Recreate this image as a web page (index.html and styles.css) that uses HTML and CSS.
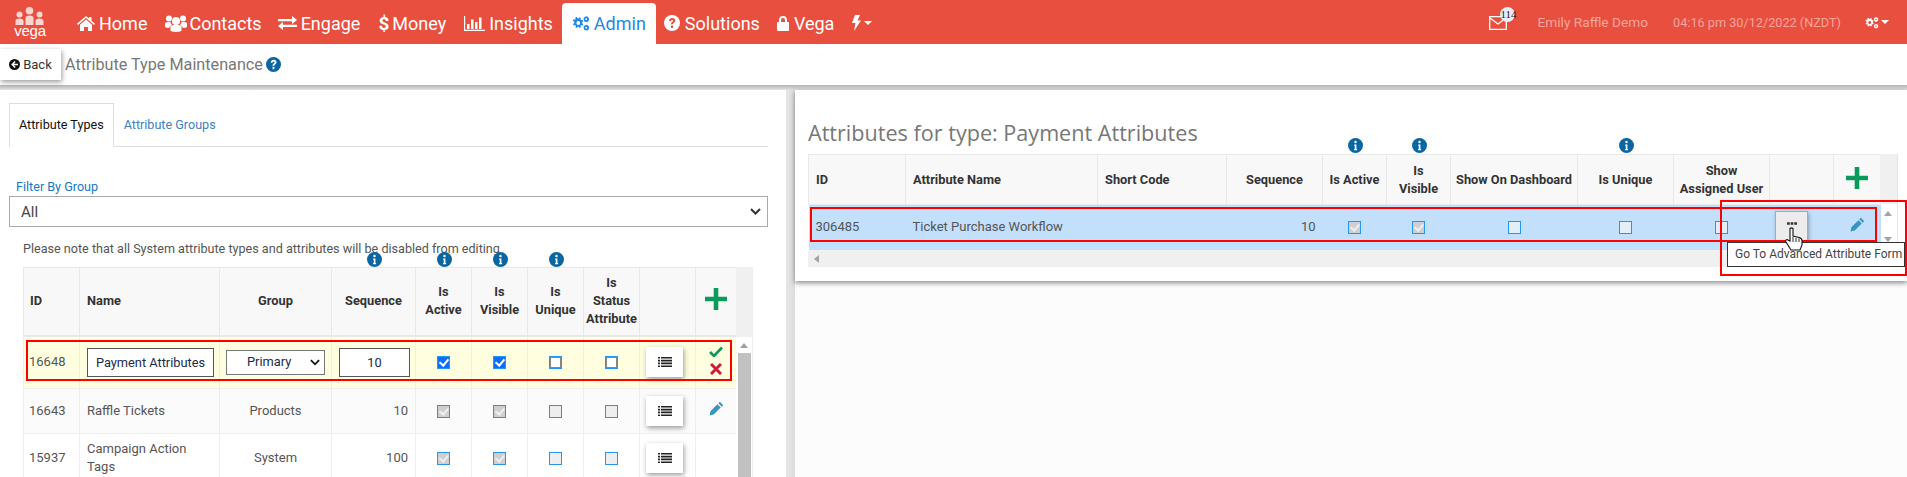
FILE: index.html
```html
<!DOCTYPE html>
<html lang="en">
<head>
    <meta charset="UTF-8">
    <title>Attribute Type Maintenance</title>
    <link rel="stylesheet" href="styles.css">
</head>
<body>
    <!-- Icons -->
    <svg class="defs" width="0" height="0">
        <symbol id="i-info" viewBox="0 0 16 16">
            <circle cx="8" cy="8" r="8" fill="#0a66a3"/>
            <circle cx="8" cy="4.3" r="1.3" fill="#fff"/>
            <path d="M6.6 6.900h2.400v4.900h.7v1.300H6.400v-1.300h.8V8.200h-.6z" fill="#fff"/>
        </symbol>
        <symbol id="i-list" viewBox="0 0 14 10">
            <path d="M0 0h2v1.600H0zM3 0h11v1.600H3zM0 2.800h2v1.600H0zM3 2.800h11v1.600H3zM0 5.600h2v1.600H0zM3 5.600h11v1.600H3zM0 8.400h2V10H0zM3 8.400h11V10H3z" fill="#222"/>
        </symbol>
        <symbol id="i-pencil" viewBox="0 0 16 16">
            <path d="M11.6 .9l3.500 3.500-1.600 1.600L10 2.500zM9 3.500L12.500 7 5 14.500 .6 15.400l.9-4.400z" fill="#3a93c0"/>
        </symbol>
        <symbol id="i-plus" viewBox="0 0 22 22">
            <path d="M8.700 0h4.600v8.700H22v4.600h-8.700V22H8.700v-8.700H0V8.700h8.700z" fill="#0a9a5c"/>
        </symbol>
        <symbol id="i-gears" viewBox="0 0 20 16">
            <path d="M7 3l1.200.3.7-1.300 1.600.9-.5 1.300.9.9 1.300-.5.8 1.600-1.200.8v1.300l1.200.7-.8 1.700-1.300-.5-.9.9.5 1.400-1.600.8-.7-1.300H7l-.7 1.300-1.600-.8.5-1.400-.9-.9-1.400.5-.8-1.700 1.300-.7V6.500L1.800 5.700l.8-1.600 1.400.5.9-.9-.5-1.300 1.600-.9zM7.700 6a2 2 0 100 4 2 2 0 000-4z" fill="currentColor"/>
            <path d="M16 .5l.7.8 1-.2.3 1 1 .4-.3 1 .6.9-.8.7.1 1-1 .2-.5.9-1-.4-.9.4-.5-.9-1-.2.1-1-.8-.7.6-.9-.3-1 1-.4.3-1 1 .2zM16 3a1 1 0 100 2 1 1 0 000-2zM16 9.500l.7.8 1-.2.3 1 1 .4-.3 1 .6.9-.8.7.1 1-1 .2-.5.9-1-.4-.9.4-.5-.9-1-.2.1-1-.8-.7.6-.9-.3-1 1-.4.3-1 1 .2zM16 12a1 1 0 100 2 1 1 0 000-2z" fill="currentColor"/>
        </symbol>
    </svg>

    <!-- Navigation Bar -->
    <header class="topbar">
        <div class="logo">
            <svg width="30" height="18" viewBox="0 0 30 18">
                <g fill="#fbd5cf">
                    <circle cx="14.500" cy="3.800" r="3.800"/>
                    <path d="M10.500 11q0-2.500 4-2.500t4 2.500v7h-8z"/>
                    <circle cx="4.500" cy="7.500" r="3"/>
                    <path d="M.5 14q0-2.500 4-2.500t4 2.500v4h-8z"/>
                    <circle cx="24.500" cy="7.500" r="3"/>
                    <path d="M20.500 14q0-2.500 4-2.500t4 2.500v4h-8z"/>
                </g>
            </svg>
            <span class="logo-text">vega</span>
        </div>
        <nav class="menu">
            <a class="menu-item">
                <svg width="18" height="15" viewBox="0 0 18 15"><path d="M9 0l3 2.600V1h2.500v3.800L18 7.800l-1 1.100L9 2 1 8.900 0 7.800zM9 3.500l6 5.200V15h-4v-4H7v4H3V8.700z" fill="#fff"/></svg>
                Home
            </a>
            <a class="menu-item contacts">
                <svg width="22" height="17" viewBox="0 0 22 17"><g fill="#fff"><circle cx="11" cy="6" r="4"/><path d="M5.500 11q5.500-3 11 0v5q-5.500 2-11 0z"/><circle cx="4" cy="3.500" r="3"/><circle cx="18" cy="3.500" r="3"/><path d="M0 8q2-1.500 5.500-.8Q6 9 7 10q-2.500 1-3 3-2.500 0-4-1zM22 8q-2-1.500-5.500-.8Q16 9 15 10q2.500 1 3 3 2.500 0 4-1z"/></g></svg>
                Contacts
            </a>
            <a class="menu-item engage">
                <svg width="19" height="14" viewBox="0 0 19 14"><path d="M0 3h14V0l5 4-5 4V5.200H0zM19 8.800H5V6l-5 4 5 4v-3h14z" fill="#fff"/></svg>
                Engage
            </a>
            <a class="menu-item money"><span class="dollar">$</span> Money</a>
            <a class="menu-item insights">
                <svg width="21" height="15" viewBox="0 0 21 15"><path d="M0 0h1.200v13.800H21V15H0zM3 8h2.500v5H3zM7 3.500h2.500V13H7zM11 6h2.500v7H11zM15 1.500h2.500V13H15z" fill="#fff"/></svg>
                Insights
            </a>
            <a class="menu-item admin">
                <svg width="19" height="16" viewBox="0 0 20 16"><use href="#i-gears"/></svg>
                Admin
            </a>
            <a class="menu-item solutions">
                <svg width="16" height="16" viewBox="0 0 16 16"><circle cx="8" cy="8" r="8" fill="#fff"/><path d="M5 6q.3-3 3.200-3 3 .1 3 2.700 0 1.400-1.400 2.200-.9.5-.9 1.400H7V8.800q0-1.300 1.200-1.900.9-.5.9-1.100 0-.9-.9-.9-1 0-1.300 1.300zM7 10.500h2V13H7z" fill="#e94f3f"/></svg>
                Solutions
            </a>
            <a class="menu-item vega">
                <svg width="12" height="15" viewBox="0 0 12 15"><path d="M2 6V4a4 4 0 018 0v2h1a1 1 0 011 1v7a1 1 0 01-1 1H1a1 1 0 01-1-1V7a1 1 0 011-1zm2 0h4V4a2 2 0 00-4 0z" fill="#fff"/></svg>
                Vega
            </a>
            <a class="menu-item bolt">
                <svg width="9" height="16" viewBox="0 0 9 16"><path d="M3 0h5L5.500 5.500H9L2 16l1.500-8H0z" fill="#fff"/></svg>
                <i class="caret"></i>
            </a>
        </nav>
        <div class="user-area">
            <div class="mail">
                <svg width="18" height="14" viewBox="0 0 18 14"><path d="M.7.700h16.600v12.600H.7zM1 2l8 6 8-6" fill="none" stroke="#fff" stroke-width="1.300"/></svg>
                <span class="badge">114</span>
            </div>
            <span class="user-name">Emily Raffle Demo</span>
            <span class="clock">04:16 pm 30/12/2022 (NZDT)</span>
            <div class="settings">
                <svg width="15" height="13" viewBox="0 0 20 16"><use href="#i-gears"/></svg>
                <i class="caret"></i>
            </div>
        </div>
    </header>

    <!-- Sub header -->
    <div class="subbar">
        <button class="back-btn">
            <svg width="11" height="11" viewBox="0 0 16 16"><circle cx="8" cy="8" r="8" fill="#111"/><path d="M8.200 3l1.500 1.500L7.200 7H13v2H7.200l2.500 2.500L8.200 13l-5-5z" fill="#fff"/></svg>
            Back
        </button>
        <h1 class="page-title">Attribute Type Maintenance</h1>
        <svg class="help" width="15" height="15" viewBox="0 0 16 16"><circle cx="8" cy="8" r="8" fill="#0a66a3"/><path d="M5 6q.3-3 3.200-3 3 .1 3 2.700 0 1.400-1.400 2.200-.9.5-.9 1.400H7V8.800q0-1.300 1.200-1.900.9-.5.9-1.100 0-.9-.9-.9-1 0-1.300 1.300zM7 10.500h2V13H7z" fill="#fff"/></svg>
    </div>
    <div class="sub-shadow"></div>

    <div class="content">
        <!-- Left panel -->
        <section class="left-panel">
            <div class="tabs">
                <a class="tab active">Attribute Types</a>
                <a class="tab">Attribute Groups</a>
            </div>
            <label class="filter-label">Filter By Group</label>
            <div class="filter-select">
                <span>All</span>
                <svg width="11" height="7" viewBox="0 0 11 7"><path d="M1 1l4.500 4.500L10 1" fill="none" stroke="#333" stroke-width="2"/></svg>
            </div>
            <p class="note">Please note that all System attribute types and attributes will be disabled from editing</p>

            <div class="table-wrap">
                <table class="grid types">
                    <colgroup>
                        <col style="width:56px"><col style="width:140px"><col style="width:112px"><col style="width:84px">
                        <col style="width:56px"><col style="width:56px"><col style="width:56px"><col style="width:56px">
                        <col style="width:56px"><col style="width:41px">
                    </colgroup>
                    <thead>
                        <tr>
                            <th class="left">ID</th>
                            <th class="left">Name</th>
                            <th>Group</th>
                            <th class="has-info"><svg class="info"><use href="#i-info"/></svg>Sequence</th>
                            <th class="has-info"><svg class="info"><use href="#i-info"/></svg>Is<br>Active</th>
                            <th class="has-info"><svg class="info"><use href="#i-info"/></svg>Is<br>Visible</th>
                            <th class="has-info"><svg class="info"><use href="#i-info"/></svg>Is<br>Unique</th>
                            <th>Is<br>Status<br>Attribute</th>
                            <th></th>
                            <th><svg class="plus"><use href="#i-plus"/></svg></th>
                        </tr>
                    </thead>
                    <tbody>
                        <tr class="edit-row">
                            <td>16648</td>
                            <td><input class="field name-field" value="Payment Attributes"></td>
                            <td class="center">
                                <div class="group-select"><span>Primary</span>
                                    <svg width="10" height="7" viewBox="0 0 11 7"><path d="M1 1l4.500 4.500L10 1" fill="none" stroke="#111" stroke-width="2"/></svg>
                                </div>
                            </td>
                            <td><input class="field seq-field" value="10"></td>
                            <td class="center"><i class="check on"></i></td>
                            <td class="center"><i class="check on"></i></td>
                            <td class="center"><i class="check blank"></i></td>
                            <td class="center"><i class="check blank"></i></td>
                            <td class="center"><button class="list-btn"><svg width="14" height="10"><use href="#i-list"/></svg></button></td>
                            <td class="center actions">
                                <svg width="14" height="11" viewBox="0 0 14 11"><path d="M1 6l4 4 8-8.500" fill="none" stroke="#0a9a5c" stroke-width="2.600"/></svg>
                                <svg width="12" height="12" viewBox="0 0 12 12"><path d="M1 1l10 10M11 1L1 11" fill="none" stroke="#d01c3c" stroke-width="3"/></svg>
                            </td>
                        </tr>
                        <tr class="row-a">
                            <td>16643</td><td>Raffle Tickets</td><td class="center">Products</td><td class="right">10</td>
                            <td class="center"><i class="check off-on"></i></td>
                            <td class="center"><i class="check off-on"></i></td>
                            <td class="center"><i class="check off"></i></td>
                            <td class="center"><i class="check off"></i></td>
                            <td class="center"><button class="list-btn"><svg width="14" height="10"><use href="#i-list"/></svg></button></td>
                            <td class="center"><svg width="15" height="15"><use href="#i-pencil"/></svg></td>
                        </tr>
                        <tr class="row-b">
                            <td>15937</td><td>Campaign Action Tags</td><td class="center">System</td><td class="right">100</td>
                            <td class="center"><i class="check off-on"></i></td>
                            <td class="center"><i class="check off-on"></i></td>
                            <td class="center"><i class="check off"></i></td>
                            <td class="center"><i class="check off"></i></td>
                            <td class="center"><button class="list-btn"><svg width="14" height="10"><use href="#i-list"/></svg></button></td>
                            <td></td>
                        </tr>
                    </tbody>
                </table>
                <div class="vscroll">
                    <div class="vscroll-head"></div>
                    <i class="arrow-up"></i>
                    <div class="vscroll-thumb"></div>
                </div>
                <div class="red-box edit-box"></div>
            </div>
        </section>

        <div class="divider"></div>

        <!-- Right panel -->
        <section class="right-panel">
            <div class="card">
                <h2 class="card-title">Attributes for type: Payment Attributes</h2>
                <div class="table-wrap attr-wrap">
                    <table class="grid attrs">
                        <colgroup>
                            <col style="width:97px"><col style="width:192px"><col style="width:129px"><col style="width:96px">
                            <col style="width:64px"><col style="width:64px"><col style="width:127px"><col style="width:96px">
                            <col style="width:96px"><col style="width:64px"><col style="width:47px">
                        </colgroup>
                        <thead>
                            <tr>
                                <th class="left">ID</th>
                                <th class="left">Attribute Name</th>
                                <th class="left">Short Code</th>
                                <th>Sequence</th>
                                <th class="has-info"><svg class="info"><use href="#i-info"/></svg>Is Active</th>
                                <th class="has-info"><svg class="info"><use href="#i-info"/></svg>Is<br>Visible</th>
                                <th>Show On Dashboard</th>
                                <th class="has-info"><svg class="info"><use href="#i-info"/></svg>Is Unique</th>
                                <th>Show<br>Assigned User</th>
                                <th></th>
                                <th><svg class="plus"><use href="#i-plus"/></svg></th>
                            </tr>
                        </thead>
                        <tbody>
                            <tr class="selected">
                                <td>306485</td><td>Ticket Purchase Workflow</td><td></td><td class="right">10</td>
                                <td class="center"><i class="check off-on"></i></td>
                                <td class="center"><i class="check off-on"></i></td>
                                <td class="center"><i class="check off"></i></td>
                                <td class="center"><i class="check off"></i></td>
                                <td class="center"><i class="check off"></i></td>
                                <td class="center"><button class="more-btn"><svg width="10" height="3" viewBox="0 0 11 3"><path d="M0 0h3v3H0zM4 0h3v3H4zM8 0h3v3H8z" fill="#333"/></svg></button></td>
                                <td class="center"><svg width="15" height="15"><use href="#i-pencil"/></svg></td>
                            </tr>
                        </tbody>
                    </table>
                    <div class="hscroll"><i class="arrow-left"></i></div>
                    <div class="side-head"></div>
                    <i class="arrow-up side-up"></i>
                    <i class="arrow-down side-down"></i>
                    <div class="red-box row-box"></div>
                    <div class="tooltip">Go To Advanced Attribute Form</div>
                    <div class="red-box tip-box"></div>
                    <svg class="cursor" width="19" height="24" viewBox="0 0 19 24">
                        <path d="M5 1.500q1.500-1.200 3 0V9l6 1.500q3 .8 3 3V18l-2 5H6L1 15q-1-2 1-2.500L5 14z" fill="#fff" stroke="#111" stroke-width="1.100"/>
                        <path d="M8 10v5M11 11v4M14 11.500V15" stroke="#111" stroke-width=".9" fill="none"/>
                    </svg>
                </div>
            </div>
        </section>
    </div>
</body>
</html>
```

FILE: styles.css
```css
/* General Reset */
* {
    box-sizing: border-box;
}

html, body {
    height: 100%;
}

body {
    margin: 0;
    overflow: hidden;
    font-family: Roboto, sans-serif;
    font-size: 13px;
    color: #555;
    background-color: #fff;
}

.defs {
    position: absolute;
}

/* Navigation Bar */
.topbar {
    height: 44px;
    background-color: #e94f3f;
    display: flex;
    align-items: flex-end;
    color: #fff;
}

.logo {
    width: 30px;
    height: 44px;
    margin: 0 32px 0 15px;
    align-self: flex-start;
    padding-top: 7px;
    display: flex;
    flex-direction: column;
    align-items: center;
}

.logo svg {
    flex: none;
}

.logo-text {
    font-family: "Liberation Sans", sans-serif;
    font-size: 15px;
    line-height: 12px;
    letter-spacing: -0.3px;
    color: #fff;
}

.menu {
    display: flex;
    height: 41px;
    flex: 1;
}

.menu-item {
    display: flex;
    align-items: center;
    gap: 4px;
    font-size: 18px;
    height: 41px;
    padding-bottom: 1px;
    white-space: nowrap;
}

.contacts { margin-left: 18px; gap: 2px; }
.engage { margin-left: 16px; }
.money { margin-left: 18px; gap: 3px; }
.insights { margin-left: 18px; }

.dollar {
    font-weight: bold;
    font-size: 19px;
}

.admin {
    margin-left: 9px;
    width: 94px;
    padding-left: 9px;
    background-color: #fff;
    border-radius: 4px 4px 0 0;
    color: #1e88e5;
}

.solutions { margin-left: 8px; gap: 5px; }
.vega { margin-left: 17px; gap: 5px; }
.bolt { margin-left: 18px; gap: 3px; }

.caret {
    display: inline-block;
    width: 0;
    height: 0;
    border-left: 4px solid transparent;
    border-right: 4px solid transparent;
    border-top: 4px solid #fff;
}

.user-area {
    display: flex;
    align-items: center;
    height: 44px;
    padding-right: 18px;
    font-size: 13px;
    color: #f5a59c;
}

.mail {
    position: relative;
    width: 18px;
    height: 14px;
    margin: 2px 30px 0 0;
    display: flex;
}

.badge {
    position: absolute;
    left: 11px;
    top: -9px;
    width: 15px;
    height: 15px;
    border-radius: 50%;
    background-color: #e8edf8;
    color: #222;
    font-family: "Liberation Serif", serif;
    font-size: 11px;
    line-height: 15px;
    text-align: center;
}

.user-name {
    margin-right: 25px;
    font-size: 13.7px;
}

.clock {
    font-size: 12.7px;
}

.settings {
    margin-left: 23px;
    display: flex;
    align-items: center;
    gap: 2px;
    color: #fff;
}

/* Sub header */
.subbar {
    height: 41px;
    display: flex;
    align-items: center;
    background-color: #fff;
}

.back-btn {
    width: 61px;
    height: 31px;
    margin-top: -1px;
    border: none;
    background-color: #fff;
    box-shadow: 1px 2px 5px rgba(0, 0, 0, 0.4);
    font-family: Roboto, sans-serif;
    font-size: 13px;
    color: #333;
    display: flex;
    align-items: center;
    justify-content: center;
    gap: 3px;
    padding: 0;
}

.page-title {
    margin: 0 3px 0 4px;
    font-size: 16.2px;
    font-weight: normal;
    color: #777;
    white-space: nowrap;
}

.sub-shadow {
    height: 5px;
    background: linear-gradient(#b4b4b4, #e2e2e2);
}

/* Content */
.content {
    display: flex;
    height: 387px;
}

.left-panel {
    width: 786px;
    height: 387px;
    overflow: hidden;
    padding: 13px 0 0 9px;
    background-color: #fff;
}

.divider {
    width: 9px;
    background: linear-gradient(90deg, #e6e6e6, #dcdcdc);
}

.tabs {
    display: flex;
    width: 759px;
    height: 44px;
    border-bottom: 1px solid #ddd;
}

.tab {
    padding: 0 10px;
    height: 44px;
    line-height: 44px;
    font-size: 12.6px;
    color: #3b82c4;
    white-space: nowrap;
}

.tab.active {
    color: #111;
    background-color: #fff;
    border: 1px solid #ddd;
    border-bottom-color: #fff;
    line-height: 42px;
    padding: 0 9px;
}

.filter-label {
    display: block;
    margin: 32px 0 0 7px;
    height: 17px;
    line-height: 16px;
    font-size: 12.6px;
    color: #1a78c2;
}

.filter-select {
    width: 759px;
    height: 31px;
    padding: 0 6px 0 11px;
    border: 1px solid #aaa;
    display: flex;
    align-items: center;
    justify-content: space-between;
    font-size: 15px;
    color: #444;
}

.note {
    margin: 13px 0 0 14px;
    height: 17px;
    line-height: 17px;
    font-size: 12.6px;
    color: #555;
    white-space: nowrap;
}

.table-wrap {
    position: relative;
}

.left-panel .table-wrap {
    width: 730px;
    margin: 10px 0 0 14px;
}

/* Tables */
.grid {
    table-layout: fixed;
    border-collapse: collapse;
    background-color: #fff;
}

.types {
    width: 713px;
}

.grid th {
    background-color: #f8f8f8;
    border: 1px solid #e8e8e8;
    color: #333;
    font-weight: bold;
    font-size: 12.8px;
    line-height: 18px;
    text-align: center;
    padding: 0 2px;
}

.grid th.left {
    text-align: left;
    padding-left: 7px;
}

.types thead tr {
    height: 68px;
}

.grid td {
    border: 1px solid #eee;
    padding: 0 7px;
    line-height: 18px;
}

.grid td.center {
    text-align: center;
    padding: 0;
}

.grid td.right {
    text-align: right;
}

.types th:first-child {
    padding-left: 6px;
}

.types td:first-child {
    padding-left: 5px;
}

.has-info {
    position: relative;
}

.info {
    position: absolute;
    left: 50%;
    top: -16px;
    width: 15px;
    height: 15px;
    margin-left: -7px;
}

.plus {
    display: block;
    width: 22px;
    height: 22px;
    margin: -4px auto 0;
}

.edit-row {
    height: 53px;
    background-color: #ffffe0;
}

.types .edit-row td {
    border-top: 2px solid #e8e8e8;
}

.row-a {
    height: 45px;
    background-color: #fbfbfb;
}

.row-b {
    height: 48px;
}

.field {
    height: 29px;
    border: 1px solid #555;
    background-color: #fff;
    font-family: Roboto, sans-serif;
    font-size: 12.8px;
    color: #1b2a49;
    text-align: center;
    padding: 0;
    display: block;
}

.name-field {
    width: 127px;
}

.seq-field {
    width: 71px;
}

.group-select {
    width: 99px;
    height: 25px;
    margin: 0 auto;
    border: 1px solid #777;
    background-color: #fff;
    color: #1b2a49;
    font-size: 12.8px;
    display: flex;
    align-items: center;
    justify-content: space-between;
    padding: 0 4px 0 20px;
}

.check {
    display: inline-block;
    width: 13px;
    height: 13px;
    vertical-align: middle;
    border: 1.5px solid #2196f3;
    position: relative;
}

.check.on {
    background-color: #0d6efd;
}

.check.on::after, .check.off-on::after {
    content: "";
    position: absolute;
    left: 3px;
    top: 0;
    width: 4px;
    height: 7px;
    border: solid #fff;
    border-width: 0 2px 2px 0;
    transform: rotate(40deg);
}

.check.blank {
    background-color: #fff;
    box-shadow: inset 0 0 0 1px #888;
}

.check.off {
    background-color: #eee;
}

.selected .check.off {
    background-color: #e4eef7;
}

.check.off-on {
    background-color: #cfcfcf;
}

.check.off-on::after {
    border-color: #eee;
}

.list-btn {
    width: 37px;
    height: 30px;
    margin-right: 6px;
    border: none;
    padding: 0;
    background-color: #fff;
    box-shadow: 1px 2px 5px rgba(0, 0, 0, 0.4);
    display: inline-flex;
    align-items: center;
    justify-content: center;
    vertical-align: middle;
}

.actions svg {
    display: block;
    margin: -3px auto 6px;
}

.actions svg:last-child {
    margin: 0 auto;
}

/* Scrollbars */
.vscroll {
    position: absolute;
    left: 713px;
    top: 0;
    width: 17px;
    height: 210px;
    background-color: #fff;
    border-right: 1px solid #eee;
}

.vscroll-head {
    height: 70px;
    background-color: #f0f0f0;
}

.vscroll-thumb {
    position: absolute;
    left: 2px;
    top: 86px;
    width: 13px;
    height: 124px;
    background-color: #c1c1c1;
}

.arrow-up, .arrow-down, .arrow-left {
    position: absolute;
    width: 0;
    height: 0;
}

.arrow-up {
    border-left: 4px solid transparent;
    border-right: 4px solid transparent;
    border-bottom: 5px solid #a3a3a3;
}

.arrow-down {
    border-left: 4px solid transparent;
    border-right: 4px solid transparent;
    border-top: 5px solid #a3a3a3;
}

.arrow-left {
    left: 6px;
    top: 5px;
    border-top: 4px solid transparent;
    border-bottom: 4px solid transparent;
    border-right: 5px solid #a3a3a3;
}

.vscroll .arrow-up {
    left: 4px;
    top: 76px;
}

/* Red annotations */
.red-box {
    position: absolute;
    border: 2px solid #f00;
}

.edit-box {
    left: 3px;
    top: 73px;
    width: 706px;
    height: 41px;
}

/* Right panel */
.right-panel {
    flex: 1;
    background-color: #fcfcfc;
}

.card {
    height: 191px;
    padding: 0 9px 0 13px;
    background-color: #fff;
    box-shadow: 0 2px 5px rgba(0, 0, 0, 0.45);
}

.card-title {
    margin: 0;
    padding-top: 26px;
    height: 64px;
    font-family: "Open Sans", sans-serif;
    font-size: 21.6px;
    font-weight: normal;
    line-height: 34px;
    color: #777;
    white-space: nowrap;
}

.attr-wrap {
    width: 1090px;
    height: 113px;
    border-bottom: 1px solid #e4e4e4;
    border-right: 1px solid #e4e4e4;
}

.attrs {
    width: 1072px;
}

.attrs thead tr {
    height: 50px;
}

.attrs th.has-info .info {
    top: -17px;
}

.selected {
    height: 45px;
    background-color: #c2dffb;
}

.selected td {
    border: none;
}

.more-btn {
    width: 33px;
    height: 30px;
    margin-right: 20px;
    margin-top: -2px;
    border: 1px solid #aaa;
    padding: 0 0 6px;
    background-color: #ececec;
    box-shadow: 1px 2px 4px rgba(0, 0, 0, 0.3);
    display: inline-flex;
    align-items: center;
    justify-content: center;
    vertical-align: middle;
}

.hscroll {
    position: relative;
    height: 17px;
    background-color: #f0f0f0;
}

.side-head {
    position: absolute;
    left: 1072px;
    top: 0;
    width: 17px;
    height: 50px;
    background-color: #f0f0f0;
}

.side-up {
    left: 1076px;
    top: 57px;
}

.side-down {
    left: 1076px;
    top: 83px;
}

.row-box {
    left: 2px;
    top: 53px;
    width: 1067px;
    height: 35px;
}

.tooltip {
    position: absolute;
    left: 919px;
    top: 88px;
    width: 178px;
    height: 25px;
    padding-left: 7px;
    border: 1px solid #333;
    background-color: #fff;
    color: #444;
    font-size: 12px;
    line-height: 23px;
    white-space: nowrap;
}

.tip-box {
    left: 912px;
    top: 46px;
    width: 187px;
    height: 76px;
}

.cursor {
    position: absolute;
    left: 977px;
    top: 73px;
}
```
